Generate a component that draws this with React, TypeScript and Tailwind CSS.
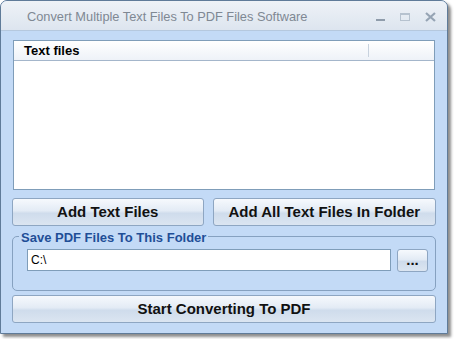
import React from "react";

const F = { fontFamily: '"Liberation Sans", Arial, sans-serif' };

function Btn({ children, className }: { children: React.ReactNode; className?: string }) {
  return (
    <div
      className={`flex items-center justify-center rounded-[3px] border border-[#8ea6c2] bg-[linear-gradient(#f6f9fd_0%,#e3ebf5_45%,#cfdcec_55%,#dbe5f1_100%)] font-bold text-[15px] text-[#111] ${className ?? ""}`}
    >
      {children}
    </div>
  );
}

export default function App() {
  return (
    <div className="w-[454px] h-[339px] bg-white" style={F}>
      <div className="relative w-[448px] h-[334px] rounded-t-[7px] border border-[#5f7b99] bg-[#c3daf6] shadow-[3px_3px_3px_rgba(0,0,0,0.45)] flex flex-col">
        <div className="h-[30px] rounded-t-[6px] bg-[linear-gradient(#eef2f7,#dde5ef)] border-b border-[#b5c8de] flex items-center pl-[26px] pr-[11px] pt-[3px]">
          <div className="flex-1 text-[12.8px] text-[#7f8893]">
            Convert Multiple Text Files To PDF Files Software
          </div>
          <div className="flex items-center gap-[15px] text-[#95a2b2]">
            <div className="w-[9px] h-[2px] bg-[#8f9cab] mt-[5px]" />
            <div className="w-[10px] h-[8px] border border-[#b6c2cf] border-t-[2px]" />
            <svg width="11" height="10" viewBox="0 0 11 10">
              <path d="M1 1 L10 9 M10 1 L1 9" stroke="#96a4b4" strokeWidth="2.2" />
            </svg>
          </div>
        </div>
        <div className="flex-1 flex flex-col px-[11px] pt-[9px]">
          <div className="h-[150px] mx-[1px] border border-[#7f9db9] bg-white flex flex-col">
            <div className="h-[20px] flex items-stretch border-b border-[#a4b6cb] bg-[linear-gradient(#ffffff,#eef2f8)]">
              <div className="w-[355px] flex items-center pl-[10px] font-bold text-[13px] text-black border-r border-[#c8d2de] my-[3px]">
                Text files
              </div>
            </div>
          </div>
          <div className="flex gap-[9px] mt-[8px]">
            <Btn className="w-[192px] h-[28px]">Add Text Files</Btn>
            <Btn className="w-[224px] h-[28px]">Add All Text Files In Folder</Btn>
          </div>
          <div className="relative mt-[10px] h-[55px] rounded-[5px] border border-[#86a1c0]">
            <div className="absolute left-[6px] top-[-9px] px-[2px] bg-[#c3daf6] text-[13px] font-bold text-[#1f4e97]">
              Save PDF Files To This Folder
            </div>
            <div className="flex gap-[6px] pl-[14px] pt-[12px]">
              <div className="w-[364px] h-[22px] bg-white border border-[#7f9db9] flex items-center pl-[3px] text-[12px] text-black">
                C:\
              </div>
              <Btn className="w-[31px] h-[23px] text-[12px]">...</Btn>
            </div>
          </div>
          <Btn className="mt-[4px] h-[28px]">Start Converting To PDF</Btn>
        </div>
      </div>
    </div>
  );
}
